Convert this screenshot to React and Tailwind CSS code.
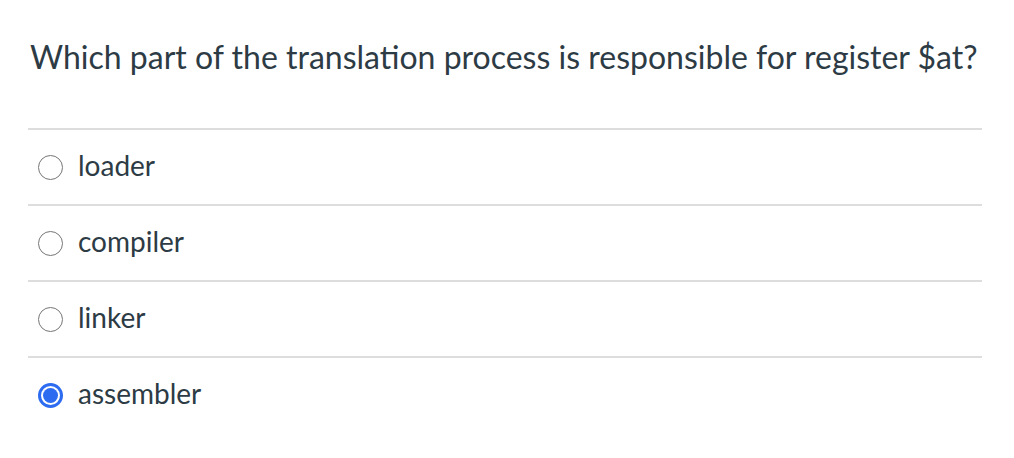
export default function App() {
  const options = [
    { label: "loader", checked: false },
    { label: "compiler", checked: false },
    { label: "linker", checked: false },
    { label: "assembler", checked: true },
  ];
  return (
    <div className="w-[1014px] h-[458px] bg-white px-[28px] overflow-hidden" style={{ fontFamily: "Lato, 'Open Sans', sans-serif" }}>
      <div className="w-[954px]">
        <h1 className="pt-[37px] pl-[2px] text-[32px] leading-[40px] text-[#2d3b45] font-normal mb-[51px] whitespace-nowrap">
          Which part of the translation process is responsible for register $at?
        </h1>
        <div>
          {options.map((o) => (
            <div key={o.label} className="border-t-2 border-[#dddddd] h-[76px] flex items-center gap-[15px] pl-[10px]">
              {o.checked ? (
                <span className="w-[25px] h-[25px] rounded-full border-[3px] border-[#2d6cf0] flex items-center justify-center">
                  <span className="w-[15px] h-[15px] rounded-full bg-[#2d6cf0]" />
                </span>
              ) : (
                <span className="w-[25px] h-[25px] rounded-full border-[1.5px] border-[#767676] bg-white" />
              )}
              <span className="text-[28px] leading-[34px] pb-[4px] text-[#2d3b45]">{o.label}</span>
            </div>
          ))}
        </div>
      </div>
    </div>
  );
}
